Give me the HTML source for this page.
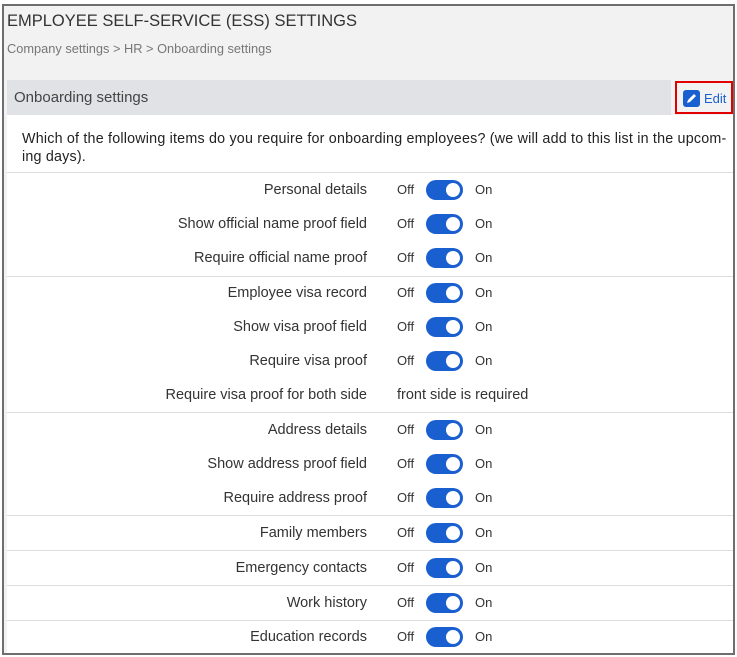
<!DOCTYPE html>
<html><head><meta charset="utf-8"><style>
*{margin:0;padding:0;box-sizing:border-box}
body{width:737px;height:657px;background:#fff;font-family:"Liberation Sans",sans-serif;color:#333;position:relative;overflow:hidden}
.bg{position:absolute;left:2px;top:4px;width:733px;height:651px;background:#f2f2f2}
.frame{position:absolute;left:2px;top:4px;width:733px;height:651px;border:2px solid #6e6e6e;z-index:5}
.title{position:absolute;left:7px;top:12px;font-size:16.5px;color:#333}
.bc{position:absolute;left:7px;top:41px;font-size:12.8px;color:#777}
.ph{position:absolute;left:7px;top:80px;width:664px;height:35px;background:#e1e2e5;font-size:15px;color:#444;padding:9px 0 0 7px}
.edit{position:absolute;left:675px;top:81px;width:58px;height:33px;border:2px solid #e00000;font-size:13px;color:#1a5fd0;padding:7px 0 0 6px}
.edit .ic{display:inline-block;width:17px;height:17px;background:#1a5fd0;border-radius:3px;vertical-align:-4px;margin-right:4px;position:relative}
.content{position:absolute;left:7px;top:115px;width:727px;height:539px;background:#fff}
.intro{position:absolute;left:15px;top:15px;width:712px;font-size:14.3px;letter-spacing:0.2px;line-height:18px;color:#222;white-space:nowrap}
.sep{position:absolute;left:0;width:727px;height:1px;background:#ddd}
.row{position:absolute;left:0;width:727px;height:20px;font-size:14.5px}
.lab{position:absolute;right:367px;top:3px;white-space:nowrap}
.off{position:absolute;left:390px;top:3px;font-size:13px}
.tg{position:absolute;left:419px;top:1px;width:37px;height:20px;background:#1a5fd0;border-radius:10px}
.tg:after{content:"";position:absolute;right:3px;top:3px;width:14px;height:14px;background:#fff;border-radius:50%}
.on{position:absolute;left:468px;top:3px;font-size:13px}
.txt{position:absolute;left:390px;top:3px}
</style></head><body>
<div class="bg"></div>
<div class="frame"></div>
<div class="title">EMPLOYEE SELF-SERVICE (ESS) SETTINGS</div>
<div class="bc">Company settings &gt; HR &gt; Onboarding settings</div>
<div class="ph">Onboarding settings</div>
<div class="edit"><span class="ic"><svg width="17" height="17" viewBox="0 0 17 17"><path d="M4 13l1-3 6-6 2 2-6 6z" fill="#fff"/></svg></span>Edit</div>
<div class="content">
<div class="intro">Which of the following items do you require for onboarding employees? (we will add to this list in the upcom-<br>ing days).</div>
<div class="sep" style="top:57px"></div>
<div class="row" style="top:64px"><span class="lab">Personal details</span><span class="off">Off</span><span class="tg"></span><span class="on">On</span></div>
<div class="row" style="top:98px"><span class="lab">Show official name proof field</span><span class="off">Off</span><span class="tg"></span><span class="on">On</span></div>
<div class="row" style="top:132px"><span class="lab">Require official name proof</span><span class="off">Off</span><span class="tg"></span><span class="on">On</span></div>
<div class="sep" style="top:161px"></div>
<div class="row" style="top:167px"><span class="lab">Employee visa record</span><span class="off">Off</span><span class="tg"></span><span class="on">On</span></div>
<div class="row" style="top:201px"><span class="lab">Show visa proof field</span><span class="off">Off</span><span class="tg"></span><span class="on">On</span></div>
<div class="row" style="top:235px"><span class="lab">Require visa proof</span><span class="off">Off</span><span class="tg"></span><span class="on">On</span></div>
<div class="row" style="top:269px"><span class="lab">Require visa proof for both side</span><span class="txt">front side is required</span></div>
<div class="sep" style="top:297px"></div>
<div class="row" style="top:304px"><span class="lab">Address details</span><span class="off">Off</span><span class="tg"></span><span class="on">On</span></div>
<div class="row" style="top:338px"><span class="lab">Show address proof field</span><span class="off">Off</span><span class="tg"></span><span class="on">On</span></div>
<div class="row" style="top:372px"><span class="lab">Require address proof</span><span class="off">Off</span><span class="tg"></span><span class="on">On</span></div>
<div class="sep" style="top:400px"></div>
<div class="row" style="top:407px"><span class="lab">Family members</span><span class="off">Off</span><span class="tg"></span><span class="on">On</span></div>
<div class="sep" style="top:435px"></div>
<div class="row" style="top:442px"><span class="lab">Emergency contacts</span><span class="off">Off</span><span class="tg"></span><span class="on">On</span></div>
<div class="sep" style="top:470px"></div>
<div class="row" style="top:477px"><span class="lab">Work history</span><span class="off">Off</span><span class="tg"></span><span class="on">On</span></div>
<div class="sep" style="top:505px"></div>
<div class="row" style="top:511px"><span class="lab">Education records</span><span class="off">Off</span><span class="tg"></span><span class="on">On</span></div>
</div>
</body></html>
